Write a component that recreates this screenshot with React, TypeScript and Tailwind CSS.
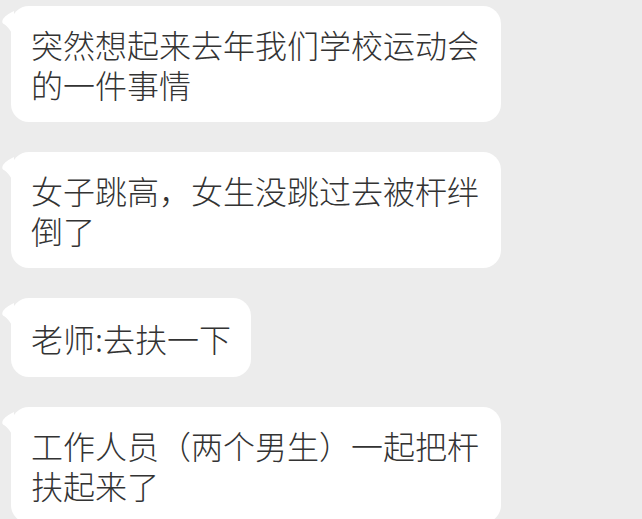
const messages = [
  "突然想起来去年我们学校运动会的一件事情",
  "女子跳高，女生没跳过去被杆绊倒了",
  "老师:去扶一下",
  "工作人员（两个男生）一起把杆扶起来了",
];

function Bubble({ text }: { text: string }) {
  return (
    <div className="relative ml-[11px] flex min-h-[79px] w-fit max-w-[490px] items-center rounded-[18px] bg-white px-5 py-[18px]">
      {/* little tail pointing back at the sender */}
      <svg
        className="absolute left-[-9px] top-[3px]"
        width="12"
        height="28"
        viewBox="0 0 12 28"
      >
        <path d="M12 2 C8 4 4 6 1 10 C0 12 0 14 1 14.5 C4 16 8 20 12 28 Z" fill="#ffffff" />
      </svg>
      <p className="text-[32px] font-light leading-[40px] text-[#333333] break-all">{text}</p>
    </div>
  );
}

export default function App() {
  return (
    <div
      className="h-[519px] w-[642px] overflow-hidden bg-[#ececec] pt-[6px]"
      style={{ fontFamily: '"Noto Sans CJK SC", "Noto Sans", sans-serif' }}
    >
      <div className="flex flex-col gap-[30px]">
        {messages.map((m, i) => (
          <Bubble key={i} text={m} />
        ))}
      </div>
    </div>
  );
}
